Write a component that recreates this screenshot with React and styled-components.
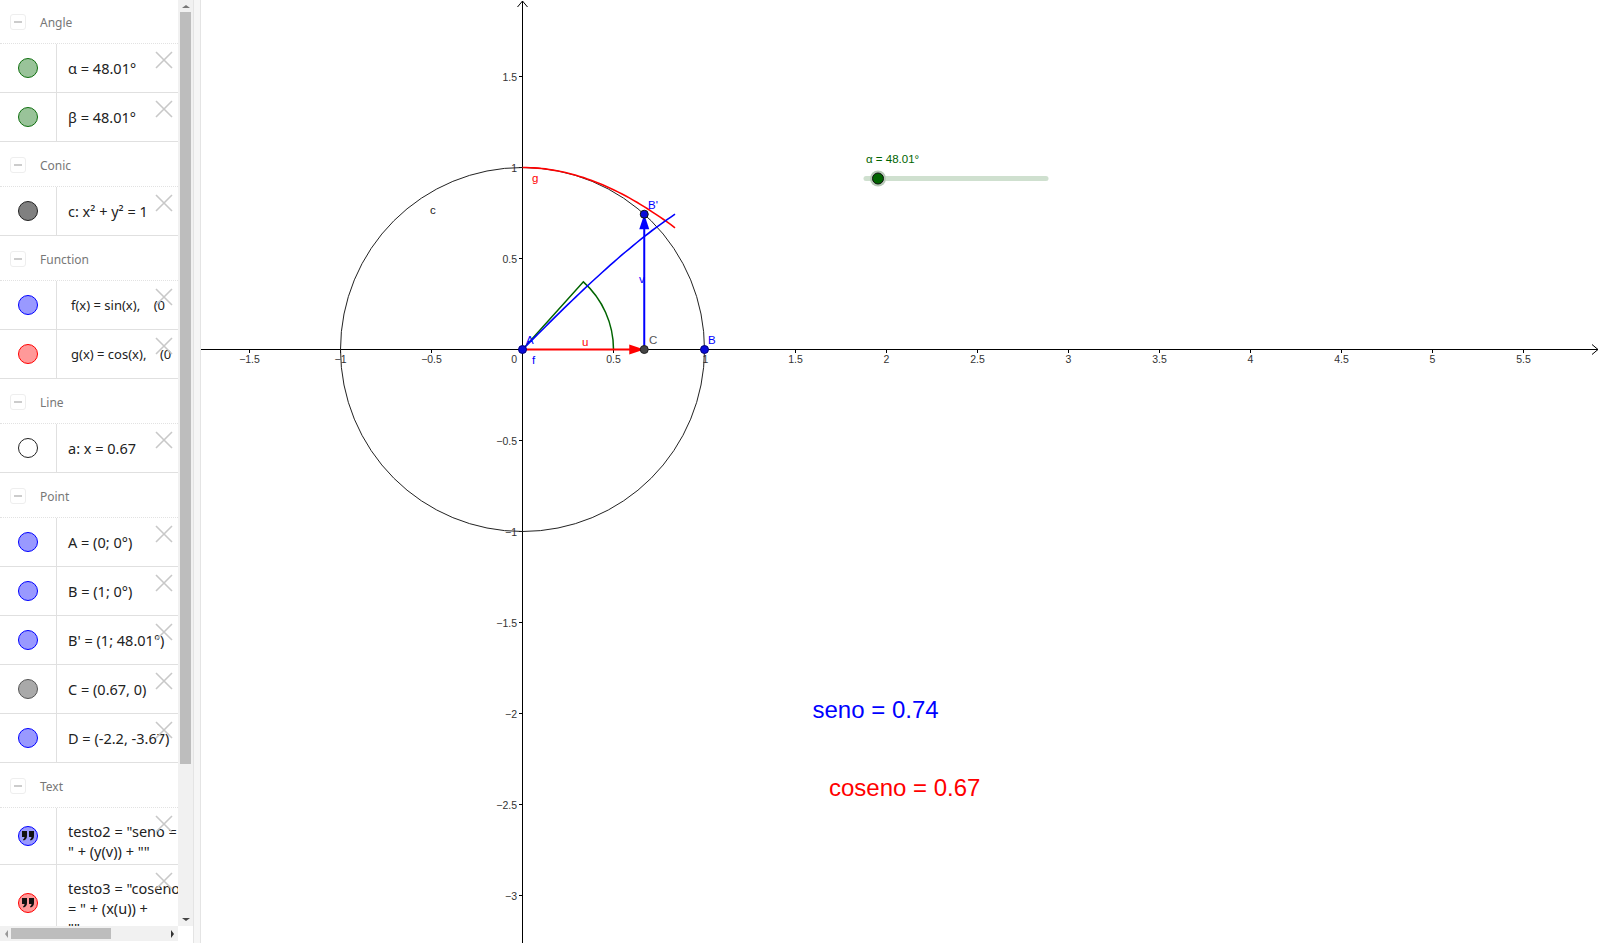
import styled, { createGlobalStyle } from "styled-components";

const GlobalStyle = createGlobalStyle`
  html, body {
    margin: 0;
    height: 100%;
    overflow: hidden;
    background: #fff;
    font-family: "Liberation Sans", Arial, sans-serif;
  }
  #root {
    height: 100%;
  }
`;

const Page = styled.div`
  display: flex;
  width: 1600px;
  height: 943px;
`;
const Side = styled.div`
  width: 193px;
  flex: none;
  display: flex;
  flex-direction: column;
`;
const SideTop = styled.div`
  display: flex;
  height: 926px;
`;
const List = styled.div`
  width: 178px;
  flex: none;
  overflow: hidden;
`;
const ListInner = styled.div`
  margin-top: -1px;
`;
const GroupHeader = styled.div`
  height: 44px;
  display: flex;
  align-items: center;
  gap: 14px;
  padding: 2px 0 0 10px;
  box-sizing: border-box;
  height: 45px;
  border-bottom: 1px dotted #e2e2e2;
  color: #777;
  font: 12px "Noto Sans", sans-serif;
`;
const Toggle = styled.span`
  width: 16px;
  height: 16px;
  box-sizing: border-box;
  border: 1px solid #eee;
  border-radius: 3px;
  display: flex;
  align-items: center;
  justify-content: center;
  &::before {
    content: "";
    width: 8px;
    height: 2px;
    background: #ccc;
  }
`;
const Row = styled.div`
  position: relative;
  display: flex;
  box-sizing: border-box;
  height: ${(props) => props.height || 49}px;
  border-bottom: 1px solid #e0e0e0;
`;
const MarbleCell = styled.div`
  width: 57px;
  flex: none;
  box-sizing: border-box;
  border-right: 1px solid #e0e0e0;
  display: flex;
  align-items: center;
  justify-content: center;
`;
const Marble = styled.span`
  width: 20px;
  height: 20px;
  box-sizing: border-box;
  margin-right: 1px;
  border-radius: 50%;
  border: 1px solid ${(props) => props.line};
  background: ${(props) => props.fill};
  display: flex;
  align-items: center;
  justify-content: center;
`;
const Formula = styled.div`
  flex: 1;
  min-width: 0;
  overflow: hidden;
  display: flex;
  flex-direction: column;
  justify-content: ${(props) => (props.multi ? "flex-start" : "center")};
  padding: ${(props) => (props.multi ? "13px 0 0 11px" : `0 0 0 ${props.indent || 11}px`)};
  color: #222;
  font: ${(props) => props.size || 14.5}px/20px "Noto Sans", sans-serif;
  white-space: pre;
`;
const Remove = styled.svg`
  position: absolute;
  top: 7px;
  left: 155px;
  width: 18px;
  height: 18px;
  stroke: #c8c8c8;
  stroke-width: 1.6;
  fill: none;
`;
const VBar = styled.div`
  width: 15px;
  flex: none;
  background: #f1f1f1;
  display: flex;
  flex-direction: column;
  align-items: center;
  justify-content: space-between;
  padding-bottom: 5px;
  box-sizing: border-box;
`;
const VThumbWrap = styled.div`
  width: 100%;
  display: flex;
  flex-direction: column;
  align-items: center;
  gap: 4px;
  padding-top: 5px;
`;
const VThumb = styled.div`
  width: 11px;
  height: 752px;
  background: #bdbdbd;
`;
const Arrow = styled.span`
  width: 0;
  height: 0;
  border-style: solid;
  border-color: transparent;
  border-width: ${(props) =>
    props.dir === "up" || props.dir === "down" ? "3px 4px" : "4px 3px"};
  ${(props) => `border-${{ up: "bottom", down: "top", left: "right", right: "left" }[props.dir]}-color: ${props.color};`}
  ${(props) => `border-${{ up: "top", down: "bottom", left: "left", right: "right" }[props.dir]}-width: 0;`}
`;
const HBar = styled.div`
  width: 178px;
  height: 15px;
  background: #f1f1f1;
  display: flex;
  align-items: center;
  justify-content: space-between;
  padding: 0 4px 0 5px;
  box-sizing: border-box;
`;
const HThumb = styled.div`
  width: 100px;
  height: 11px;
  margin-left: 3px;
  margin-right: auto;
  background: #bdbdbd;
`;
const Splitter = styled.div`
  width: 8px;
  flex: none;
  box-sizing: border-box;
  background: #f6f6f6;
  border-left: 1px solid #e4e4e4;
  border-right: 1px solid #e4e4e4;
`;
const Canvas = styled.svg`
  flex: 1;
  height: 943px;
  display: block;
`;
const AxisText = styled.text`
  font: 10.5px "Liberation Sans", Arial, sans-serif;
  fill: #333;
`;
const Label = styled.text`
  font: 11.5px "Liberation Sans", Arial, sans-serif;
  fill: ${(props) => props.color};
`;
const BigText = styled.text`
  font: 24px "Liberation Sans", Arial, sans-serif;
  fill: ${(props) => props.color};
`;

const BLUE = ["#9999ff", "#0000ff"];
const RED = ["#ff9999", "#ff0000"];
const GREEN = ["#99c399", "#0f6f0f"];

const groups = [
  {
    name: "Angle",
    items: [
      { text: "α = 48.01°", marble: GREEN },
      { text: "β = 48.01°", marble: GREEN },
    ],
  },
  { name: "Conic", items: [{ text: "c: x² + y² = 1", marble: ["#808080", "#222"] }] },
  {
    name: "Function",
    items: [
      { text: "f(x) = sin(x),    (0", marble: BLUE, indent: 14, size: 13 },
      { text: "g(x) = cos(x),    (0", marble: RED, indent: 14, size: 13 },
    ],
  },
  { name: "Line", items: [{ text: "a: x = 0.67", marble: ["#fff", "#222"] }] },
  {
    name: "Point",
    items: [
      { text: "A = (0; 0°)", marble: BLUE },
      { text: "B = (1; 0°)", marble: BLUE },
      { text: "B' = (1; 48.01°)", marble: BLUE },
      { text: "C = (0.67, 0)", marble: ["#a9a9a9", "#555"] },
      { text: "D = (-2.2, -3.67)", marble: BLUE },
    ],
  },
  {
    name: "Text",
    items: [
      { lines: ['testo2 = "seno =', '" + (y(v)) + ""'], marble: BLUE, quote: true, height: 57 },
      { lines: ['testo3 = "coseno', '= " + (x(u)) +', '""'], marble: RED, quote: true, height: 77 },
    ],
  },
];

const OX = 321.5; // origin, relative to the canvas
const OY = 349.5;
const UNIT = 182;
const ALPHA = 0.838;
const sx = (x) => OX + x * UNIT;
const sy = (y) => OY - y * UNIT;
const fmt = (v) => (v < 0 ? "−" + Math.abs(v) : String(v));

const xTicks = [-1.5, -1, -0.5, 0.5, 1, 1.5, 2, 2.5, 3, 3.5, 4, 4.5, 5, 5.5];
const yTicks = [1.5, 1, 0.5, -0.5, -1, -1.5, -2, -2.5, -3];

function curve(fn) {
  const pts = [];
  for (let i = 0; i <= 40; i++) {
    const x = (ALPHA * i) / 40;
    pts.push(`${sx(x).toFixed(1)},${sy(fn(x)).toFixed(1)}`);
  }
  return pts.join(" ");
}

const cosA = Math.cos(ALPHA);
const sinA = Math.sin(ALPHA);

const QuoteIcon = () => (
  <svg width="14" height="10" viewBox="0 0 14 10">
    <path d="M1 0h5v5c0 2.500-1.500 4-3.500 4.500L2 8.300c1-.4 1.500-1.300 1.500-2.300H1zM8 0h5v5c0 2.500-1.500 4-3.500 4.500L9 8.300c1-.4 1.500-1.300 1.500-2.300H8z" fill="#111" />
  </svg>
);

const Graph = () => (
  <Canvas viewBox="0 0 1399 943">
    {/* axes */}
    <path d="M0 349.500H1397M1391 344.500l6 5-6 5" stroke="#000" fill="none" />
    <path d="M321.500 943V1M316.500 7l5-6 5 6" stroke="#000" fill="none" />
    {xTicks.map((t) => (
      <g key={t}>
        <line x1={sx(t)} x2={sx(t)} y1={349.5} y2={353} stroke="#000" />
        <AxisText x={sx(t) + (t === 1 ? 1 : 0)} y={363} textAnchor="middle">
          {fmt(t)}
        </AxisText>
      </g>
    ))}
    {yTicks.map((t) => (
      <g key={t}>
        <line x1={318} x2={321.5} y1={sy(t)} y2={sy(t)} stroke="#000" />
        <AxisText x={316} y={sy(t) + 4} textAnchor="end">
          {fmt(t)}
        </AxisText>
      </g>
    ))}
    <AxisText x={316} y={363} textAnchor="end">0</AxisText>

    <circle cx={OX} cy={OY} r={UNIT} fill="none" stroke="#222" />

    {/* angle sector */}
    <path
      d={`M${OX} ${OY}L${sx(0.5 * cosA)} ${sy(0.5 * sinA)}A91 91 0 0 1 ${sx(0.5)} ${OY}`}
      fill="none"
      stroke="#006400"
      strokeWidth="1.5"
    />

    <polyline points={curve(Math.cos)} fill="none" stroke="#ff0000" strokeWidth="1.6" />
    <polyline points={curve(Math.sin)} fill="none" stroke="#0000ff" strokeWidth="1.6" />

    {/* vectors */}
    <line x1={OX} y1={OY} x2={sx(cosA) - 12} y2={OY} stroke="#ff0000" strokeWidth="2" />
    <polygon points={`${sx(cosA)},${OY} ${sx(cosA) - 15},${OY - 5} ${sx(cosA) - 15},${OY + 5}`} fill="#ff0000" />
    <line x1={sx(cosA)} y1={OY} x2={sx(cosA)} y2={sy(sinA) + 12} stroke="#0000ff" strokeWidth="2" />
    <polygon
      points={`${sx(cosA)},${sy(sinA)} ${sx(cosA) - 5},${sy(sinA) + 15} ${sx(cosA) + 5},${sy(sinA) + 15}`}
      fill="#0000ff"
    />

    {/* points */}
    <circle cx={OX} cy={OY} r={4} fill="#0a0ad8" stroke="#00007a" />
    <circle cx={sx(1)} cy={OY} r={4} fill="#0a0ad8" stroke="#00007a" />
    <circle cx={sx(cosA)} cy={OY} r={4} fill="#444" stroke="#222" />
    <circle cx={sx(cosA)} cy={sy(sinA)} r={4} fill="#0a0ad8" stroke="#111" />

    {/* labels */}
    <Label x={325} y={344} color="#0000ff">A</Label>
    <Label x={507} y={344} color="#0000ff">B</Label>
    <Label x={447} y={209} color="#0000ff">B'</Label>
    <Label x={448} y={344} color="#555">C</Label>
    <Label x={331} y={364} color="#0000ff">f</Label>
    <Label x={331} y={182} color="#ff0000">g</Label>
    <Label x={381} y={346} color="#ff0000">u</Label>
    <Label x={438} y={283} color="#0000ff">v</Label>
    <Label x={229} y={214} color="#222">c</Label>

    {/* slider */}
    <Label x={665} y={163} color="#006400">α = 48.01°</Label>
    <line x1={665} y1={178.5} x2={845} y2={178.5} stroke="#cfe0cf" strokeWidth="5" strokeLinecap="round" />
    <circle cx={677} cy={178.5} r={8} fill="#b8c9b8" />
    <circle cx={677} cy={178.5} r={5.5} fill="#006400" stroke="#111" />

    <BigText x={611.5} y={718} color="#0000ff">seno = 0.74</BigText>
    <BigText x={628} y={796} color="#ff0000">coseno = 0.67</BigText>
  </Canvas>
);

const App = () => (
  <Page>
    <GlobalStyle />
    <Side>
      <SideTop>
        <List>
          <ListInner>
            {groups.map((group) => (
              <div key={group.name}>
                <GroupHeader>
                  <Toggle />
                  {group.name}
                </GroupHeader>
                {group.items.map((item, i) => (
                  <Row key={i} height={item.height}>
                    <MarbleCell>
                      <Marble fill={item.marble[0]} line={item.marble[1]}>
                        {item.quote && <QuoteIcon />}
                      </Marble>
                    </MarbleCell>
                    {item.lines ? (
                      <Formula multi>
                        {item.lines.map((line) => (
                          <span key={line}>{line}</span>
                        ))}
                      </Formula>
                    ) : (
                      <Formula indent={item.indent} size={item.size}>
                        {item.text}
                      </Formula>
                    )}
                    <Remove viewBox="0 0 18 18">
                      <path d="M1 1L17 17M17 1L1 17" />
                    </Remove>
                  </Row>
                ))}
              </div>
            ))}
          </ListInner>
        </List>
        <VBar>
          <VThumbWrap>
            <Arrow dir="up" color="#777" />
            <VThumb />
          </VThumbWrap>
          <Arrow dir="down" color="#444" />
        </VBar>
      </SideTop>
      <HBar>
        <Arrow dir="left" color="#999" />
        <HThumb />
        <Arrow dir="right" color="#333" />
      </HBar>
    </Side>
    <Splitter />
    <Graph />
  </Page>
);

export default App;
